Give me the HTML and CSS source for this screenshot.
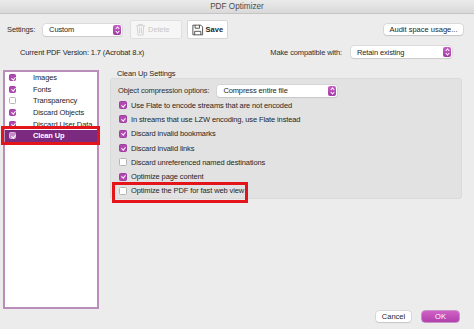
FILE: index.html
```html
<!DOCTYPE html>
<html lang="en">
<head>
    <meta charset="UTF-8">
    <title>PDF Optimizer</title>
    <link rel="stylesheet" href="styles.css">
</head>
<body>
    <div class="window">
        <div class="titlebar">PDF Optimizer</div>

        <div class="toolbar">
            <span class="label">Settings:</span>
            <div class="popup settings-popup">
                <span>Custom</span>
                <i class="stepper"></i>
            </div>
            <button class="tool-button delete" disabled>
                <svg width="11" height="13" viewBox="0 0 12 14">
                    <path d="M1 3h10M4 3V1.5h4V3M2.5 3l.7 10h5.6l.7-10M5 5v6M7 5v6" fill="none" stroke="#d0d0d0" stroke-width="1"/>
                </svg>
                Delete
            </button>
            <button class="tool-button save">
                <svg width="12" height="12" viewBox="0 0 13 13">
                    <path d="M1 1h9l2 2v9H1z" fill="none" stroke="#444" stroke-width="1"/>
                    <path d="M3.5 1v3.5h5V1M3 12V8h7v4" fill="none" stroke="#444" stroke-width="1"/>
                </svg>
                Save
            </button>
            <button class="push audit">Audit space usage...</button>
        </div>

        <div class="version-row">
            <span class="version">Current PDF Version: 1.7 (Acrobat 8.x)</span>
            <span class="label compat-label">Make compatible with:</span>
            <div class="popup compat-popup">
                <span>Retain existing</span>
                <i class="stepper"></i>
            </div>
        </div>

        <div class="main">
            <ul class="panel-list">
                <li><i class="check on"></i>Images</li>
                <li><i class="check on"></i>Fonts</li>
                <li><i class="check"></i>Transparency</li>
                <li><i class="check on"></i>Discard Objects</li>
                <li><i class="check on"></i>Discard User Data</li>
                <li class="selected"><i class="check on"></i>Clean Up<span class="highlight list-highlight"></span></li>
            </ul>

            <div class="content">
                <div class="group-title">Clean Up Settings</div>
                <div class="group">
                    <div class="option-row">
                        <span class="label">Object compression options:</span>
                        <div class="popup compress-popup">
                            <span>Compress entire file</span>
                            <i class="stepper"></i>
                        </div>
                    </div>
                    <div class="opt"><i class="check on"></i>Use Flate to encode streams that are not encoded</div>
                    <div class="opt"><i class="check on"></i>In streams that use LZW encoding, use Flate instead</div>
                    <div class="opt"><i class="check on"></i>Discard invalid bookmarks</div>
                    <div class="opt"><i class="check on"></i>Discard invalid links</div>
                    <div class="opt"><i class="check"></i>Discard unreferenced named destinations</div>
                    <div class="opt"><i class="check on"></i>Optimize page content</div>
                    <div class="opt"><i class="check"></i>Optimize the PDF for fast web view<span class="highlight opt-highlight"></span></div>
                </div>

                <div class="footer">
                    <button class="push cancel">Cancel</button>
                    <button class="push ok">OK</button>
                </div>
            </div>
        </div>
    </div>
</body>
</html>
```

FILE: styles.css
```css
body {
    margin: 0;
    background: #ececec;
    font-family: "Liberation Sans", Arial, sans-serif;
    font-size: 7.5px;
    letter-spacing: -0.12px;
    color: #262626;
    overflow: hidden;
}

.window {
    width: 474px;
    height: 329px;
    display: flex;
    flex-direction: column;
}

.titlebar {
    height: 13px;
    line-height: 14px;
    text-align: center;
    font-size: 8.2px;
    letter-spacing: 0;
    color: #4d4d4d;
    background: linear-gradient(#ebebeb, #d9d9d9);
    border-bottom: 1px solid #c4c4c4;
}

/* toolbar */

.toolbar {
    display: flex;
    align-items: center;
    height: 19px;
    margin: 6px 11px 0 7px;
    white-space: nowrap;
}

.label {
    color: #2e2e2e;
}

.popup {
    display: flex;
    align-items: center;
    justify-content: space-between;
    box-sizing: border-box;
    height: 12px;
    padding: 0 1px 0 6px;
    background: #fff;
    border-radius: 3px;
    box-shadow: 0 0 0 0.5px #c9c9c9, 0 1px 1px rgba(0, 0, 0, 0.12);
    color: #262626;
}

.stepper {
    width: 8px;
    height: 10px;
    border-radius: 2px;
    background: linear-gradient(#c960c8, #a03aa6);
    position: relative;
}

.stepper::before,
.stepper::after {
    content: '';
    position: absolute;
    left: 2.5px;
    width: 2px;
    height: 2px;
    border: solid #fff;
    border-width: 1px 0 0 1px;
}

.stepper::before {
    top: 2px;
    transform: rotate(45deg);
}

.stepper::after {
    top: 5px;
    transform: rotate(225deg);
}

.settings-popup {
    width: 79px;
    margin-left: 8px;
}

.tool-button {
    display: flex;
    align-items: center;
    gap: 2px;
    height: 19px;
    box-sizing: border-box;
    padding: 0 4px;
    background: #fff;
    border: 1px solid #e0e0e0;
    border-radius: 2px;
    font-family: inherit;
    font-size: 7.5px;
    color: #262626;
}

.tool-button.delete {
    width: 52px;
    margin-left: 8px;
    background: #f6f6f6;
    color: #c8c8c8;
    padding-left: 4px;
}

.tool-button.save {
    width: 41px;
    margin-left: 5px;
    padding-left: 4px;
    font-weight: bold;
    border-color: #d6d6d6;
}

.push {
    height: 11px;
    box-sizing: border-box;
    padding: 0;
    background: #fff;
    border: none;
    border-radius: 3px;
    box-shadow: 0 0 0 0.5px #c6c6c6, 0 1px 1px rgba(0, 0, 0, 0.15);
    font-family: inherit;
    font-size: 7.5px;
    color: #262626;
}

.audit {
    width: 79px;
    margin-left: auto;
}

/* compatibility row */

.version-row {
    display: flex;
    align-items: center;
    height: 12px;
    margin: 7px 22px 0 20px;
    white-space: nowrap;
}

.compat-label {
    margin-left: auto;
}

.compat-popup {
    width: 101px;
    margin-left: 9px;
}

/* main area */

.main {
    display: flex;
    flex: 1;
    margin-top: 11px;
}

.panel-list {
    list-style: none;
    margin: 1px 0 20px 3px;
    padding: 0;
    width: 96px;
    box-sizing: border-box;
    border: 2px solid #b98fba;
    background: #fff;
}

.panel-list li {
    position: relative;
    display: flex;
    align-items: center;
    height: 11.6px;
    padding-left: 4px;
    white-space: nowrap;
    color: #262626;
}

.panel-list li .check {
    margin-right: 17px;
}

.panel-list li.selected {
    background: #7c2a7f;
    color: #fff;
    font-weight: bold;
}

.panel-list li.selected .check.on {
    background: #c58ac6;
    border-color: #d8b2d8;
}

.check {
    display: inline-block;
    position: relative;
    width: 7px;
    height: 7px;
    box-sizing: border-box;
    border: 0.5px solid #b5b5b5;
    border-radius: 1.5px;
    background: #fff;
    flex: none;
}

.check.on {
    border-color: #a13ea3;
    background: #b14ab0;
}

.check.on::after {
    content: '';
    position: absolute;
    left: 1.8px;
    top: 0.4px;
    width: 1.6px;
    height: 3.2px;
    border: solid #fff;
    border-width: 0 1px 1px 0;
    transform: rotate(40deg);
}

.highlight {
    position: absolute;
    box-sizing: border-box;
    border: 3px solid #e4141b;
    pointer-events: none;
}

.list-highlight {
    left: -4px;
    right: -3px;
    top: -4px;
    bottom: -3px;
}

/* settings content */

.content {
    flex: 1;
    display: flex;
    flex-direction: column;
    margin: 0 12px 0 11px;
}

.group-title {
    height: 9px;
    line-height: 9px;
    padding-left: 7px;
}

.group {
    height: 121px;
    box-sizing: border-box;
    padding: 5px 0 0 7px;
    background: #e2e2e2;
    border: 1px solid #dadada;
    border-radius: 3px;
    white-space: nowrap;
}

.option-row {
    display: flex;
    align-items: center;
    height: 13px;
    margin-bottom: 1px;
}

.compress-popup {
    width: 120px;
    margin-left: 8px;
}

.opt {
    position: relative;
    display: flex;
    align-items: center;
    height: 14.3px;
    padding-left: 1px;
    width: max-content;
}

.opt .check {
    width: 8px;
    height: 8px;
    margin-right: 4px;
}

.opt .check.on::after {
    left: 2.2px;
    top: 0.7px;
}

.opt-highlight {
    left: -6px;
    top: -2px;
    width: 136px;
    height: 21px;
}

.footer {
    display: flex;
    justify-content: flex-end;
    gap: 11px;
    margin-top: auto;
    margin-bottom: 7px;
    padding-right: 3px;
}

.cancel {
    width: 35px;
}

.ok {
    width: 37px;
    background: linear-gradient(#d061c6, #b140ab);
    box-shadow: 0 0 0 0.5px #a5389f;
    color: #fff;
}
```
